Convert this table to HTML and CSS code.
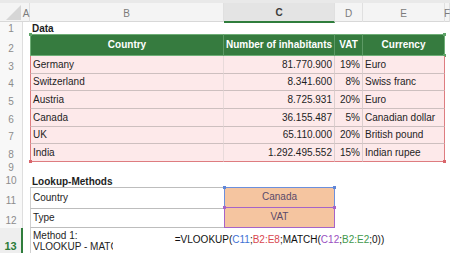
FILE: index.html
```html
<!DOCTYPE html>
<html>
<head>
<meta charset="utf-8">
<link rel="stylesheet" href="styles.css">
</head>
<body>
<div class="sheet">
  <div class="row colhdr">
    <div class="corner"><svg width="23" height="22" viewBox="0 0 23 22"><polygon points="21,5 21,20 6,20" fill="#d6d6d6"/></svg></div>
    <div class="ch">A</div>
    <div class="ch">B</div>
    <div class="ch sel">C</div>
    <div class="ch">D</div>
    <div class="ch">E</div>
    <div class="ch">F</div>
  </div>

  <div class="row r1">
    <div class="rh">1</div><div class="c"></div>
    <div class="c b">Data</div><div class="c"></div><div class="c"></div><div class="c"></div><div class="c"></div>
  </div>

  <div class="row r2">
    <div class="rh">2</div><div class="c"></div>
    <div class="c th first">Country<span class="h tl"></span></div>
    <div class="c th">Number of inhabitants</div>
    <div class="c th">VAT</div>
    <div class="c th last">Currency<span class="h tr"></span><span class="h br"></span></div>
    <div class="c"></div>
  </div>

  <div class="row rd">
    <div class="rh">3</div><div class="c"></div>
    <div class="c td first">Germany</div><div class="c td num">81.770.900</div><div class="c td num">19%</div><div class="c td last">Euro</div><div class="c"></div>
  </div>
  <div class="row rd">
    <div class="rh">4</div><div class="c"></div>
    <div class="c td first">Switzerland</div><div class="c td num">8.341.600</div><div class="c td num">8%</div><div class="c td last">Swiss franc</div><div class="c"></div>
  </div>
  <div class="row rd">
    <div class="rh">5</div><div class="c"></div>
    <div class="c td first">Austria</div><div class="c td num">8.725.931</div><div class="c td num">20%</div><div class="c td last">Euro</div><div class="c"></div>
  </div>
  <div class="row rd">
    <div class="rh">6</div><div class="c"></div>
    <div class="c td first">Canada</div><div class="c td num">36.155.487</div><div class="c td num">5%</div><div class="c td last">Canadian dollar</div><div class="c"></div>
  </div>
  <div class="row rd">
    <div class="rh">7</div><div class="c"></div>
    <div class="c td first">UK</div><div class="c td num">65.110.000</div><div class="c td num">20%</div><div class="c td last">British pound</div><div class="c"></div>
  </div>
  <div class="row rd lastrow">
    <div class="rh">8</div><div class="c"></div>
    <div class="c td first">India<span class="h bl red"></span></div><div class="c td num">1.292.495.552</div><div class="c td num">15%</div><div class="c td last">Indian rupee<span class="h br red"></span></div><div class="c"></div>
  </div>

  <div class="row r9">
    <div class="rh">9</div><div class="c"></div><div class="c"></div><div class="c"></div><div class="c"></div><div class="c"></div><div class="c"></div>
  </div>
  <div class="row r10">
    <div class="rh">10</div><div class="c"></div>
    <div class="c b">Lookup-Methods</div><div class="c"></div><div class="c"></div><div class="c"></div><div class="c"></div>
  </div>
  <div class="row r11">
    <div class="rh">11</div><div class="c"></div>
    <div class="c lk">Country</div>
    <div class="c in blue">Canada<span class="h tl bluebg"></span><span class="h tr bluebg"></span></div>
    <div class="c"></div><div class="c"></div><div class="c"></div>
  </div>
  <div class="row r12">
    <div class="rh">12</div><div class="c"></div>
    <div class="c lk">Type</div>
    <div class="c in purple">VAT<span class="h tl purplebg"></span><span class="h tr purplebg"></span></div>
    <div class="c"></div><div class="c"></div><div class="c"></div>
  </div>
  <div class="row r13">
    <div class="rh active">13</div><div class="c"></div>
    <div class="c m1"><div class="clip">Method 1:<br>VLOOKUP - MATCH</div></div>
    <div class="c fx"><span class="formula">=VLOOKUP(<span class="fb">C11</span>;<span class="fr">B2:E8</span>;MATCH(<span class="fp">C12</span>;<span class="fg">B2:E2</span>;0))</span></div>
    <div class="c"></div><div class="c"></div><div class="c"></div>
  </div>
</div>
</body>
</html>
```
FILE: styles.css
```css
html, body {
  margin: 0;
  padding: 0;
  background: #ffffff;
}
body {
  font-family: "Liberation Sans", Arial, Helvetica, sans-serif;
  font-size: 10px;
  color: #1e1e1e;
  width: 450px;
  height: 253px;
  overflow: hidden;
}
.sheet {
  display: flex;
  flex-direction: column;
}
.row {
  display: grid;
  grid-template-columns: 23px 7px 194px 111px 28px 82px 5px;
}
.c {
  position: relative;
  box-sizing: border-box;
  display: flex;
  align-items: center;
  white-space: nowrap;
  line-height: 12px;
}
.rh {
  box-sizing: border-box;
  display: flex;
  align-items: flex-end;
  justify-content: center;
  padding-bottom: 1px;
  color: #8c8c8c;
  font-size: 10px;
  line-height: 12px;
  background: #f8f8f8;
  border-right: 1px solid #dedede;
}

/* column header */
.colhdr {
  height: 22px;
  background: #f4f4f4;
  border-top: 3px solid #e9e9e9;
  border-bottom: 1px solid #d8d8d8;
  box-sizing: border-box;
}
.corner {
  margin-top: -3px;
}
.corner svg { display: block; }
.ch {
  display: flex;
  align-items: center;
  justify-content: center;
  color: #7b7b7b;
  font-size: 10px;
  border-right: 1px solid #e0e0e0;
  padding-top: 1px;
}
.ch:first-of-type { justify-content: flex-start; }
.ch.sel {
  background: #e4e4e4;
  color: #3c3c3c;
  font-weight: bold;
  border-bottom: 2px solid #2f7d3c;
  margin-bottom: -1px;
}

/* rows */
.r1 { height: 12px; }
.r2 { height: 22px; }
.rd { height: 17.667px; }
.r9 { height: 13px; }
.r10 { height: 12px; }
.r11 { height: 21px; }
.r12 { height: 20px; }
.r13 { height: 28px; }

.r1 .rh { padding-bottom: 0; }
.b {
  font-weight: bold;
  padding-left: 2px;
  padding-top: 1px;
}

/* green table header */
.th {
  background: #367b3f;
  color: #ffffff;
  font-weight: bold;
  justify-content: center;
  font-size: 10px;
  border-top: 1px solid #6fae77;
  border-bottom: 1px solid #6fae77;
  border-right: 1px solid #5d9a65;
}
.th.first { border-left: 1px solid #6fae77; }
.th.last { border-right: 1px solid #6fae77; }

/* data */
.td {
  background: #fde9ea;
  border-bottom: 1px solid #cdbfbf;
  border-right: 1px solid #dccfcf;
  padding: 1px 2px 0 2px;
}
.td.first {
  border-left: 1px solid #de7c80;
  border-right: 1px solid #e8dada;
}
.td.last { border-right: 1px solid #de7c80; }
.lastrow .td { border-bottom: 1px solid #de7c80; }
.num { justify-content: flex-end; }

/* lookup */
.lk {
  border-top: 1px solid #bdbdbd;
  border-left: 1px solid #cfcfcf;
  padding-left: 2px;
}
.r12 .lk { border-bottom: 1px solid #bdbdbd; }
.in {
  background: #f5c5a0;
  justify-content: center;
  color: #5b4a6a;
  font-size: 10px;
}
.in.blue {
  border-top: 1px solid #6d8fdc;
  border-left: 1px solid #6d8fdc;
  border-right: 1px solid #6d8fdc;
  border-bottom: 1px solid #a564c8;
}
.in.purple {
  border-left: 1px solid #a564c8;
  border-right: 1px solid #a564c8;
  border-bottom: 1px solid #a564c8;
}

/* row 13 */
.rh.active {
  color: #2b7b38;
  font-weight: bold;
  font-size: 11px;
  padding-bottom: 4px;
  background: #eeeeee;
  border-right: 2px solid #2f7d3c;
}
.m1 {
  align-items: flex-start;
  border-left: 1px solid #cfcfcf;
  padding-left: 2px;
  padding-top: 2px;
  line-height: 11px;
}
.clip {
  width: 80px;
  overflow: hidden;
  white-space: nowrap;
}
.fx {
  justify-content: center;
  align-items: flex-start;
  padding-top: 6px;
  overflow: visible;
  border-bottom: 2px solid #2f7d3c;
  margin-bottom: -3px;
}
.formula {
  color: #111;
  font-size: 10px;
  line-height: 12px;
}
.fb { color: #3f72d4; }
.fr { color: #d9474f; }
.fp { color: #9a4fc2; }
.fg { color: #3f9a4c; }

/* selection handles */
.h {
  position: absolute;
  width: 3px;
  height: 3px;
  background: #5ea468;
}
.h.tl { left: -2px; top: -2px; }
.h.tr { right: -2px; top: -2px; }
.h.br { right: -2px; bottom: -2px; }
.h.bl { left: -2px; bottom: -2px; }
.h.red { background: #d9656b; }
.h.bluebg { background: #5f86d8; }
.h.purplebg { background: #a564c8; }
```
